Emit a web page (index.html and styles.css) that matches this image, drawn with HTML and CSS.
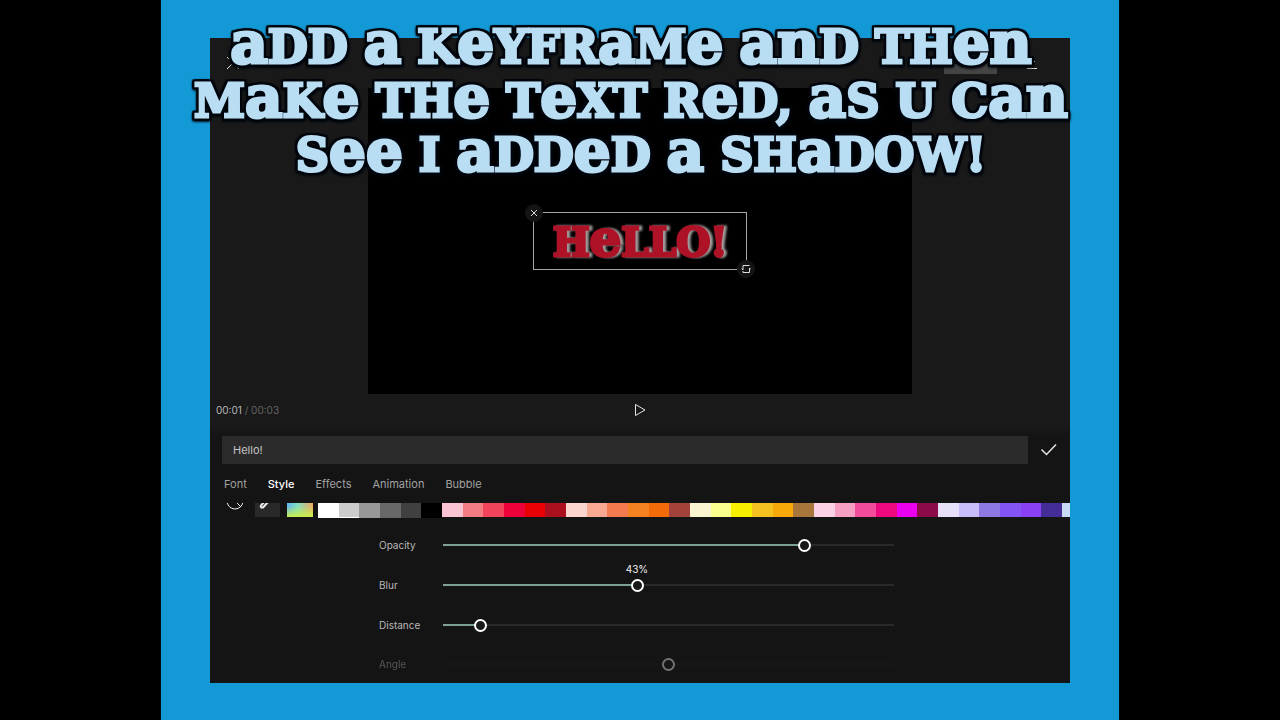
FILE: index.html
```html
<!DOCTYPE html>
<html lang="en">
<head>
<meta charset="utf-8">
<meta name="viewport" content="width=device-width, initial-scale=1">
<title>Text shadow tutorial</title>
<link rel="stylesheet" href="styles.css">
</head>
<body>
<main class="stage">
  <section class="editor">
    <header class="topbar">
      <button class="icon-btn" aria-label="Close"><svg width="14" height="14" viewBox="0 0 14 14"><path d="M1 13 13 1M1 1l12 12"/></svg></button>
      <span class="topbar-right">
        <button class="quality" aria-label="Resolution"></button>
        <button class="icon-btn" aria-label="Export"><svg width="12" height="14" viewBox="0 0 12 14"><path d="M6 10V3M3 6l3-3 3 3M1 12.500h10"/></svg></button>
      </span>
    </header>
    <div class="canvas">
      <div class="text-box">
        <span class="sample">H<span class="low">e</span>LLO!</span>
        <button class="handle handle-close" aria-label="Remove text"><svg width="8" height="8" viewBox="0 0 8 8"><path d="m1 1 6 6M7 1 1 7"/></svg></button>
        <button class="handle handle-scale" aria-label="Rotate and scale"><svg width="10" height="10" viewBox="0 0 10 10"><path d="M2 6V1.500h6.500M0.500 4.500 2 6M8.500 4v4.500H2M8.500 4 10 5.500M2 8.500V7"/></svg></button>
      </div>
    </div>
    <div class="player">
      <span class="time">00:01 <span class="total">/ 00:03</span></span>
      <button class="icon-btn" aria-label="Play"><svg width="12" height="14" viewBox="0 0 12 14"><path d="M1.500 1.500v11L11 7z"/></svg></button>
    </div>
    <div class="panel">
      <div class="entry">
        <input class="entry-text" type="text" value="Hello!" aria-label="Text">
        <button class="icon-btn confirm" aria-label="Done"><svg width="18" height="14" viewBox="0 0 18 14"><path d="m1.500 6.500 5 5 9.500-10" stroke-width="1.500"/></svg></button>
      </div>
      <nav class="tabs">
        <button class="tab">Font</button>
        <button class="tab active">Style</button>
        <button class="tab">Effects</button>
        <button class="tab">Animation</button>
        <button class="tab">Bubble</button>
      </nav>
      <div class="colors">
        <button class="tool none" aria-label="No color"><svg width="18" height="14" viewBox="0 0 18 14"><circle cx="9" cy="-2" r="8"/><path d="m3-8 12 12"/></svg></button>
        <button class="tool dropper" aria-label="Pick color"><svg width="24" height="14" viewBox="0 0 24 14"><path d="M10-2 6 2.500Q5 5 8 4.500L14-2" stroke-width="2"/></svg></button>
        <button class="tool spectrum" aria-label="Custom color"></button>
        <div class="group"><button class="c-white" aria-label="White"></button><button class="c-silver picked" aria-label="Silver"></button><button class="c-gray1" aria-label="Gray"></button><button class="c-gray2" aria-label="Dim gray"></button><button class="c-gray3" aria-label="Dark gray"></button><button class="c-black" aria-label="Black"></button></div>
        <div class="group"><button class="c-red1" aria-label="Red 1"></button><button class="c-red2" aria-label="Red 2"></button><button class="c-red3" aria-label="Red 3"></button><button class="c-red4" aria-label="Red 4"></button><button class="c-red5" aria-label="Red 5"></button><button class="c-red6" aria-label="Red 6"></button></div>
        <div class="group"><button class="c-orange1" aria-label="Orange 1"></button><button class="c-orange2" aria-label="Orange 2"></button><button class="c-orange3" aria-label="Orange 3"></button><button class="c-orange4" aria-label="Orange 4"></button><button class="c-orange5" aria-label="Orange 5"></button><button class="c-orange6" aria-label="Orange 6"></button></div>
        <div class="group"><button class="c-yellow1" aria-label="Yellow 1"></button><button class="c-yellow2" aria-label="Yellow 2"></button><button class="c-yellow3" aria-label="Yellow 3"></button><button class="c-yellow4" aria-label="Yellow 4"></button><button class="c-yellow5" aria-label="Yellow 5"></button><button class="c-yellow6" aria-label="Yellow 6"></button></div>
        <div class="group"><button class="c-pink1" aria-label="Pink 1"></button><button class="c-pink2" aria-label="Pink 2"></button><button class="c-pink3" aria-label="Pink 3"></button><button class="c-pink4" aria-label="Pink 4"></button><button class="c-pink5" aria-label="Pink 5"></button><button class="c-pink6" aria-label="Pink 6"></button></div>
        <div class="group"><button class="c-violet1" aria-label="Violet 1"></button><button class="c-violet2" aria-label="Violet 2"></button><button class="c-violet3" aria-label="Violet 3"></button><button class="c-violet4" aria-label="Violet 4"></button><button class="c-violet5" aria-label="Violet 5"></button><button class="c-violet6" aria-label="Violet 6"></button></div>
        <div class="group"><button class="c-blue1" aria-label="Blue 1"></button></div>
      </div>
      <div class="sliders">
        <div class="row"><label for="opacity">Opacity</label><div class="slide" style="--v:80%"><input id="opacity" type="range" value="81"></div></div>
        <div class="row"><label for="blur">Blur</label><div class="slide" style="--v:43%"><input id="blur" type="range" value="43"><output for="blur">43%</output></div></div>
        <div class="row"><label for="distance">Distance</label><div class="slide" style="--v:8%"><input id="distance" type="range" value="7"></div></div>
        <div class="row faded"><label for="angle">Angle</label><div class="slide" style="--v:0%"><input id="angle" type="range" value="50"></div></div>
      </div>
    </div>
  </section>
  <h1 class="caption"><span class="line"><span class="low">a</span>DD <span class="low">a</span> K<span class="low">e</span>YFR<span class="low">a</span>M<span class="low">e</span> <span class="low">an</span>D TH<span class="low">en</span></span> <span class="line">M<span class="low">a</span>K<span class="low">e</span> TH<span class="low">e</span> T<span class="low">e</span>XT R<span class="low">e</span>D, <span class="low">a</span>S U C<span class="low">an</span></span> <span class="line last">S<span class="low">ee</span> I <span class="low">a</span>DD<span class="low">e</span>D <span class="low">a</span> SH<span class="low">a</span>DOW!</span></h1>
</main>
</body>
</html>
```
FILE: styles.css
```css
* { box-sizing: border-box; }
body {
  margin: 0;
  min-height: 100vh;
  display: flex;
  justify-content: center;
  background: #000;
  font-family: Inter, "Liberation Sans", sans-serif;
  font-size: 11px;
  line-height: 16px;
  color: #b8b8b8;
}
button {
  margin: 0;
  padding: 0;
  border: 0;
  background: none;
  color: inherit;
  font: inherit;
}
svg { display: block; fill: none; stroke: currentColor; overflow: hidden; }
.stage {
  position: relative;
  width: 75%;
  padding: 38px 49px 37px;
  border: solid #000a14;
  border-width: 0 1px;
  background: #1499d7;
  display: flex;
}
.editor {
  flex: 1;
  min-width: 0;
  display: flex;
  flex-direction: column;
  background: #191919;
}
.topbar {
  height: 50px;
  padding: 0 32px 0 16px;
  display: flex;
  justify-content: space-between;
  align-items: center;
}
.topbar-right { display: flex; align-items: center; gap: 29px; }
.icon-btn { color: #e6e6e6; }
.quality { width: 53px; height: 10px; margin-top: 12px; background: #444; }
.canvas {
  align-self: center;
  width: 544px;
  max-width: 100%;
  aspect-ratio: 16 / 9;
  display: flex;
  justify-content: center;
  align-items: center;
  background: #000;
}
.text-box {
  position: relative;
  width: 214px;
  height: 58px;
  display: flex;
  justify-content: center;
  align-items: center;
  border: 1px solid #a5a5a5;
}
.sample {
  padding-top: 2px;
  font-family: "DejaVu Serif", serif;
  font-weight: bold;
  font-size: 39px;
  line-height: 56px;
  color: #ad1226;
  -webkit-text-stroke: 3px #ad1226;
  filter: drop-shadow(3px 0 1px #a39d9d);
}
.low { line-height: 1px; }
.sample .low { font-size: 50px; }
.handle {
  position: absolute;
  width: 18px;
  height: 18px;
  display: grid;
  place-items: center;
  border-radius: 50%;
  background: #141414;
  color: #ddd;
}
.handle-close { left: -9px; top: -9px; }
.handle-scale { right: -9px; bottom: -9px; }
.player {
  height: 33px;
  padding: 0 6px 2px;
  display: grid;
  grid-template-columns: 1fr auto 1fr;
  align-items: center;
}
.total { color: #646464; }
.time { font-size: 10px; }
.panel {
  flex: 1;
  padding-top: 9px;
  display: flex;
  flex-direction: column;
  background: linear-gradient(#191919, #141414 8px);
  overflow: hidden;
}
.entry { display: flex; align-items: center; gap: 12px; padding: 0 12px; }
.entry-text {
  flex: 1;
  min-width: 0;
  height: 28px;
  padding: 0 11px;
  border: 0;
  background: #2b2b2b;
  color: #c4c4c4;
  font: inherit;
}
.tabs { display: flex; gap: 21px; padding: 12px 14px 11px; }
.tab { color: #a2a2a2; }
.tab.active { color: #fff; font-weight: 500; }
.colors {
  height: 15px;
  padding-left: 16px;
  display: flex;
  overflow: hidden;
}
.tool { flex: none; height: 14px; color: #eee; }
.none { width: 18px; margin-right: 11px; }
.dropper { width: 25px; margin-right: 7px; background: #292929; }
.spectrum {
  width: 26px;
  margin-right: 5px;
  background: linear-gradient(to top, #c8f04b, transparent 80%), linear-gradient(to right, #62b4f5, #7fe0c0 40%, #f3a860);
}
.group { flex: none; width: 124px; height: 14px; display: grid; grid-template-columns: repeat(6, 1fr); }
.picked { height: 15px; border-bottom: 1px solid #fff; }
.c-white { background: #fff; } .c-silver { background: #ccc; } .c-gray1 { background: #989898; }
.c-gray2 { background: #686868; } .c-gray3 { background: #404040; } .c-black { background: #000; }
.c-red1 { background: #f9c5d2; } .c-red2 { background: #f37c82; } .c-red3 { background: #f3435a; }
.c-red4 { background: #ee0038; } .c-red5 { background: #e90005; } .c-red6 { background: #ac101f; }
.c-orange1 { background: #fbd6ce; } .c-orange2 { background: #f9a992; } .c-orange3 { background: #f47b50; }
.c-orange4 { background: #f48220; } .c-orange5 { background: #f36b08; } .c-orange6 { background: #a3413b; }
.c-yellow1 { background: #f9f5d0; } .c-yellow2 { background: #faff8b; } .c-yellow3 { background: #f8ee00; }
.c-yellow4 { background: #f4c11e; } .c-yellow5 { background: #f6a908; } .c-yellow6 { background: #a8753b; }
.c-pink1 { background: #fbd2e5; } .c-pink2 { background: #f79ec3; } .c-pink3 { background: #f24b9b; }
.c-pink4 { background: #ee087e; } .c-pink5 { background: #ea00ee; } .c-pink6 { background: #8a0b48; }
.c-violet1 { background: #e7def7; } .c-violet2 { background: #c8bdf9; } .c-violet3 { background: #8e79e3; }
.c-violet4 { background: #8454f5; } .c-violet5 { background: #8a40f5; } .c-violet6 { background: #442d96; }
.c-blue1 { background: #c9d9f8; }
.sliders { padding: 7px 176px 0 169px; }
.row { height: 40px; display: flex; align-items: center; }
.row label { width: 64px; font-size: 10px; }
.slide { position: relative; flex: 1; display: flex; }
.slide input {
  flex: 1;
  min-width: 0;
  height: 14px;
  margin: 0;
  appearance: none;
  background: linear-gradient(to right, #7da294 var(--v), #292929 var(--v)) center / 100% 2px no-repeat;
}
.slide input::-webkit-slider-thumb {
  appearance: none;
  width: 13px;
  height: 13px;
  border: 2px solid #fff;
  border-radius: 50%;
  background: #191919;
}
.slide output {
  position: absolute;
  left: var(--v);
  bottom: 15px;
  transform: translateX(-50%);
  font-size: 10px;
  line-height: 16px;
  color: #eee;
}
.faded { height: 38px; opacity: 0.4; }
.faded .slide input { background: linear-gradient(#1c1c1c, #1c1c1c) center / 100% 2px no-repeat; }
.caption {
  position: absolute;
  top: 20px;
  left: 0;
  right: 18px;
  margin: 0;
  text-align: center;
  white-space: nowrap;
  font-family: "DejaVu Serif", serif;
  font-weight: bold;
  font-size: 46px;
  line-height: 54px;
  color: #b9ddf3;
  -webkit-text-stroke: 3px #b9ddf3;
  filter: drop-shadow(2px 0 #00050c) drop-shadow(-2px 0 #00050c) drop-shadow(0 2px #00050c)
    drop-shadow(0 -2px #00050c) drop-shadow(0 1px 1px #00050c);
}
.caption .low { font-size: 58px; }
.line { display: block; }
.last { padding-left: 20px; }
```
